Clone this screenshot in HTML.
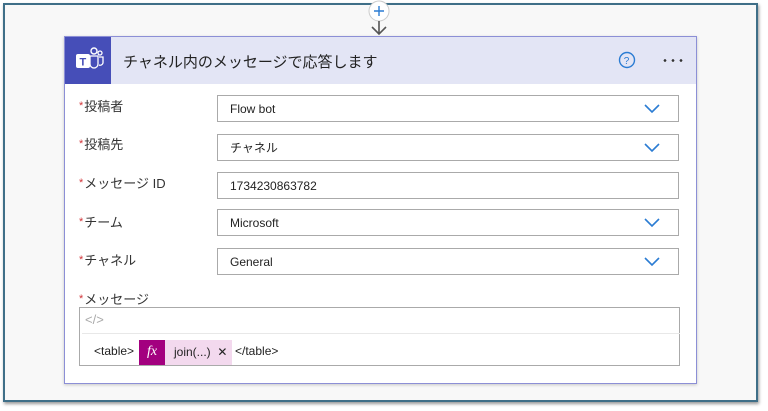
<!DOCTYPE html>
<html><head><meta charset="utf-8"><style>
body{margin:0;width:768px;height:411px;background:#fff;position:relative;overflow:hidden;font-family:"Liberation Sans","Noto Sans CJK JP",sans-serif;}
.frame{position:absolute;left:3px;top:3px;width:751px;height:395px;border:2px solid #3f6f88;background:#f8f8f8;box-shadow:1px 2px 3px #999;}
.card{position:absolute;left:64px;top:36px;width:631px;height:346px;border:1px solid #8c8fd6;background:#fff;box-shadow:0 1px 3px rgba(0,0,0,.2);}
.hdr{position:absolute;left:0;top:0;width:631px;height:47px;background:#e3e5f5;}
.ic{position:absolute;left:0;top:0;width:46px;height:47px;background:#464eb8;}
.title{position:absolute;left:58px;top:14px;font-size:15px;color:#222;}
.lab{position:absolute;left:14px;font-size:13px;color:#333;}
.lab b{color:#d13438;font-weight:normal;font-size:11px;position:relative;top:-2px;margin-right:1px}
.in{position:absolute;left:152px;width:462px;height:27px;border:1px solid #aaa;background:#fff;font-size:12px;color:#222;line-height:27px;padding-left:12px;box-sizing:border-box;}
.chev{position:absolute;right:18px;top:8px;}
</style></head><body>
<div class="frame"></div>
<svg style="position:absolute;left:366px;top:0" width="26" height="36"><circle cx="13" cy="11" r="10" fill="#fff" stroke="#ccc"/><path d="M13 6v10M8 11h10" stroke="#2b7cd3" stroke-width="1.4"/><path d="M13 21v13M6 27l7 7 7-7" stroke="#555" stroke-width="1.6" fill="none"/></svg>
<div class="card">
<div class="hdr"><div class="ic"><svg width="46" height="47"><rect x="11" y="17" width="14" height="14" rx="2" fill="#fff"/><text x="14.5" y="28.5" font-size="11" font-weight="bold" fill="#464eb8" font-family="Liberation Sans">T</text><circle cx="29" cy="14" r="3" fill="none" stroke="#fff" stroke-width="1.4"/><circle cx="35" cy="16" r="2" fill="none" stroke="#fff" stroke-width="1.3"/><path d="M25 19h8v8a4 4 0 0 1-8 0zM34 20h4v6a3 3 0 0 1-4 2" fill="none" stroke="#fff" stroke-width="1.3"/></svg></div>
<div class="title">チャネル内のメッセージで応答します</div>
<svg style="position:absolute;left:553px;top:14px" width="18" height="18"><circle cx="9" cy="9" r="7.5" fill="none" stroke="#2b7cd3" stroke-width="1.4"/><text x="5.8" y="12.8" font-size="10" fill="#2b7cd3" font-family="Liberation Sans">?</text></svg>
<div style="position:absolute;left:596px;top:22px;width:22px;height:3px;background:radial-gradient(circle,#333 1.2px,transparent 1.5px) 0 0/8px 3px repeat-x"></div>
</div>
<div class="lab" style="top:59px"><b>*</b>投稿者</div>
<div class="in" style="top:58px">Flow bot<svg class="chev" width="16" height="10"><path d="M1 1l7 7 7-7" fill="none" stroke="#2b7cd3" stroke-width="1.6"/></svg></div>
<div class="lab" style="top:97px"><b>*</b>投稿先</div>
<div class="in" style="top:97px">チャネル<svg class="chev" width="16" height="10"><path d="M1 1l7 7 7-7" fill="none" stroke="#2b7cd3" stroke-width="1.6"/></svg></div>
<div class="lab" style="top:136px"><b>*</b>メッセージ ID</div>
<div class="in" style="top:135px">1734230863782</div>
<div class="lab" style="top:175px"><b>*</b>チーム</div>
<div class="in" style="top:172px">Microsoft<svg class="chev" width="16" height="10"><path d="M1 1l7 7 7-7" fill="none" stroke="#2b7cd3" stroke-width="1.6"/></svg></div>
<div class="lab" style="top:213px"><b>*</b>チャネル</div>
<div class="in" style="top:211px">General<svg class="chev" width="16" height="10"><path d="M1 1l7 7 7-7" fill="none" stroke="#2b7cd3" stroke-width="1.6"/></svg></div>
<div class="lab" style="top:252px"><b>*</b>メッセージ</div>
<div style="position:absolute;left:14px;top:270px;width:601px;height:59px;border:1px solid #aaa;box-sizing:border-box;">
<div style="position:absolute;left:2px;top:1px;width:595px;height:24px;border-bottom:1px solid #e8e8e8;color:#aaa;font-size:13px;line-height:22px;padding-left:3px">&lt;/&gt;</div>
<div style="position:absolute;left:14px;top:36px;font-size:12px;color:#222">&lt;table&gt;</div>
<div style="position:absolute;left:59px;top:32px;width:26px;height:25px;background:#a3007f;color:#fff;font-family:'Liberation Serif',serif;font-style:italic;font-size:14px;line-height:24px;text-align:center">fx</div>
<div style="position:absolute;left:85px;top:32px;width:67px;height:25px;background:#f3d9ee;font-size:12px;line-height:24px;color:#222;padding-left:9px;box-sizing:border-box">join(...) &nbsp;✕</div>
<div style="position:absolute;left:155px;top:36px;font-size:12px;color:#222">&lt;/table&gt;</div>
</div>
</div>
</body></html>
